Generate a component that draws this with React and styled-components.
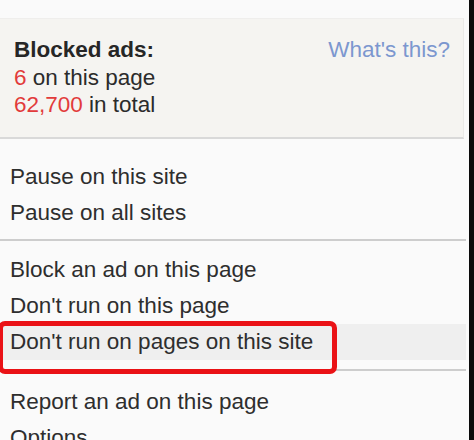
import React from "react";
import styled, { createGlobalStyle } from "styled-components";

const GlobalStyle = createGlobalStyle`
  html, body {
    margin: 0;
    padding: 0;
    background: #fafafa;
    overflow: hidden;
  }
  body {
    font-family: "Liberation Sans", Arial, sans-serif;
  }
`;

const Frame = styled.div`
  display: flex;
  width: 474px;
  height: 440px;
  overflow: hidden;
`;

const Panel = styled.div`
  flex: 1;
  display: flex;
  flex-direction: column;
  background: #fafafa;
  padding-top: 18px;
`;

const Edge = styled.div`
  width: 5px;
  background: #0a0a0a;
`;

const Header = styled.div`
  display: flex;
  justify-content: space-between;
  align-items: flex-start;
  margin-right: 5px;
  padding: 17px 13px 18px 14px;
  background: #f5f4f1;
  border-top: 1px solid #efeeec;
  border-right: 1px solid #ebeae8;
  border-bottom: 2px solid #d9d9d9;
  font-size: 22.5px;
  line-height: 27.5px;
  color: #2b2b2b;
`;

const Stats = styled.div`
  display: flex;
  flex-direction: column;
`;

const Title = styled.div`
  font-weight: bold;
  color: #262626;
`;

const Count = styled.span`
  color: #e23b3b;
`;

const HelpLink = styled.a`
  color: #7c97cf;
  text-decoration: none;
`;

const Section = styled.div`
  display: flex;
  flex-direction: column;
  padding: ${(p) => p.$top}px 0 ${(p) => p.$bottom}px;
  border-bottom: ${(p) => (p.$last ? "none" : "2px solid #cdcdcd")};
  margin-right: 3px;
`;

const Item = styled.div`
  position: relative;
  height: 36px;
  line-height: 36px;
  padding-left: 10px;
  font-size: 22.5px;
  color: #2e2e2e;
  background: ${(p) => (p.$active ? "#efefef" : "transparent")};
  white-space: nowrap;
`;

const Highlight = styled.div`
  position: absolute;
  left: -2px;
  top: -3px;
  width: 339px;
  height: 53px;
  box-sizing: border-box;
  border: 5px solid #ea1216;
  border-radius: 7px;
  pointer-events: none;
`;

const App = () => {
  return (
    <Frame>
      <GlobalStyle />
      <Panel>
        <Header>
          <Stats>
            <Title>Blocked ads:</Title>
            <div>
              <Count>6</Count> on this page
            </div>
            <div>
              <Count>62,700</Count> in total
            </div>
          </Stats>
          <HelpLink href="#">What's this?</HelpLink>
        </Header>

        <Section $top={20} $bottom={8}>
          <Item>Pause on this site</Item>
          <Item>Pause on all sites</Item>
        </Section>

        <Section $top={11} $bottom={9}>
          <Item>Block an ad on this page</Item>
          <Item>Don't run on this page</Item>
          <Item $active>
            Don't run on pages on this site
            <Highlight />
          </Item>
        </Section>

        <Section $top={13} $bottom={0} $last>
          <Item>Report an ad on this page</Item>
          <Item>Options</Item>
        </Section>
      </Panel>
      <Edge />
    </Frame>
  );
};

export default App;
